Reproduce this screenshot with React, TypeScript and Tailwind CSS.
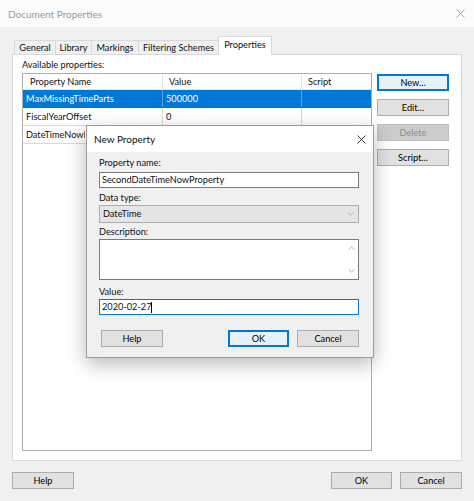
import React from 'react';

const XIcon = ({ className }: { className: string }) => (
  <svg viewBox="0 0 10 10" className={className} fill="none" stroke="currentColor" strokeWidth={1}>
    <path d="M0.5 0.5l9 9M9.5 0.5l-9 9" />
  </svg>
);

const Chevron = ({ up }: { up?: boolean }) => (
  <svg viewBox="0 0 8 5" className="w-[7px] h-[4px] text-[#a0a0a0]" fill="none" stroke="currentColor" strokeWidth={1}>
    <path d={up ? 'M0.5 4.5L4 1l3.5 3.5' : 'M0.5 0.5L4 4l3.5-3.5'} />
  </svg>
);

function Btn({ label, w, variant }: { label: string; w: string; variant?: 'default' | 'disabled' }) {
  let cls = 'bg-[#e1e1e1] border-[#adadad] text-black';
  if (variant === 'default') cls = 'bg-[#e5f1fb] border-[#0078d7] text-black shadow-[inset_0_0_0_1px_#0078d7]';
  if (variant === 'disabled') cls = 'bg-[#cccccc] border-[#bfbfbf] text-[#8c8c8c]';
  return (
    <div className={`${w} h-[17px] border flex items-center justify-center ${cls}`}>{label}</div>
  );
}

const tabs = [
  { name: 'General', w: 'w-[41px]' },
  { name: 'Library', w: 'w-[36px]' },
  { name: 'Markings', w: 'w-[47px]' },
  { name: 'Filtering Schemes', w: 'w-[80px]' },
];

// last row is half hidden behind the dialog, clip its name where the dialog starts
const rows = [
  { name: 'MaxMissingTimeParts', value: '500000', selected: true },
  { name: 'FiscalYearOffset', value: '0' },
  { name: 'DateTimeNowProperty', value: '', clip: true },
];

export default function App() {
  return (
    <div className="relative w-[474px] h-[501px] bg-[#f0f0f0] overflow-hidden text-[9.2px] leading-[12px] text-[#111] font-['Lato','Liberation_Sans',sans-serif]">
      {/* title bar */}
      <div className="h-[27px] bg-[#fbfbfb] flex items-center justify-between pl-[8px] pr-[9px]">
        <span className="text-[10px] text-[#9a9a9a]">Document Properties</span>
        <XIcon className="w-[9px] h-[9px] text-[#9a9a9a]" />
      </div>

      {/* tabs */}
      <div className="pt-[8px] flex items-end h-[27px] pl-[14px]">
        {tabs.map((t) => (
          <div key={t.name} className={`${t.w} h-[14px] border border-b-0 border-r-0 border-[#d9d9d9] flex items-center justify-center whitespace-nowrap`}>
            {t.name}
          </div>
        ))}
        <div className="w-[54px] h-[19px] -mb-px border border-b-0 border-[#d9d9d9] bg-white flex items-center justify-center relative z-10 pb-[3px]">
          Properties
        </div>
      </div>

      {/* panel */}
      <div className="mx-[12px] h-[407px] bg-white border border-[#d9d9d9] px-[9px] pt-[4px]">
        <div>Available properties:</div>
        <div className="flex mt-[2px]">
          <div className="w-[350px] h-[378px] border border-[#adadad] bg-white">
            <div className="flex h-[16px] border-b border-[#e5e5e5]">
              <div className="w-[140px] border-r border-[#e5e5e5] pl-[7px] flex items-center">Property Name</div>
              <div className="w-[139px] border-r border-[#e5e5e5] pl-[6px] flex items-center">Value</div>
              <div className="flex-1 pl-[6px] flex items-center">Script</div>
            </div>
            {rows.map((r) => (
              <div
                key={r.name}
                className={`flex h-[18px] border-b ${r.selected ? 'bg-[#0078d7] text-white border-[#0078d7]' : 'border-[#d9d9d9]'}`}
              >
                <div className={`w-[140px] border-r pl-[3px] flex items-center whitespace-nowrap overflow-hidden ${r.selected ? 'border-[#5aa0e0]' : 'border-[#d9d9d9]'}`}>
                  <span className={r.clip ? 'w-[59px] overflow-hidden' : ''}>{r.name}</span>
                </div>
                <div className={`w-[139px] border-r pl-[3px] flex items-center ${r.selected ? 'border-[#5aa0e0]' : 'border-[#d9d9d9]'}`}>{r.value}</div>
                <div className="flex-1" />
              </div>
            ))}
          </div>
          <div className="ml-[5px] flex flex-col gap-[8px] pt-[1px]">
            <Btn label="New..." w="w-[72px]" variant="default" />
            <Btn label="Edit..." w="w-[72px]" />
            <Btn label="Delete" w="w-[72px]" variant="disabled" />
            <Btn label="Script..." w="w-[72px]" />
          </div>
        </div>
      </div>

      {/* bottom buttons */}
      <div className="flex justify-between px-[12px] mt-[11px]">
        <Btn label="Help" w="w-[62px]" />
        <div className="flex gap-[8px]">
          <Btn label="OK" w="w-[61px]" />
          <Btn label="Cancel" w="w-[62px]" />
        </div>
      </div>

      {/* New Property dialog */}
      <div className="absolute left-[86px] top-[125px] w-[288px] h-[233px] bg-[#f0f0f0] border border-[#9c9c9c] shadow-[0_6px_18px_rgba(0,0,0,0.28)] z-20">
        <div className="h-[26px] bg-white flex items-center justify-between pl-[7px] pr-[7px]">
          <span className="text-[10px]">New Property</span>
          <XIcon className="w-[9px] h-[9px] text-[#222]" />
        </div>
        <div className="px-[12px] pt-[5px]">
          <div>Property name:</div>
          <div className="mt-[3px] h-[16px] w-[260px] bg-white border border-[#7a7a7a] pl-[2px] flex items-center">SecondDateTimeNowProperty</div>
          <div className="mt-[4px]">Data type:</div>
          <div className="mt-[1px] h-[18px] w-[260px] bg-[#e5e5e5] border border-[#acacac] pl-[3px] pr-[4px] flex items-center justify-between">
            <span>DateTime</span>
            <Chevron />
          </div>
          <div className="mt-[3px]">Description:</div>
          <div className="mt-[1px] h-[41px] w-[260px] bg-white border border-[#7a7a7a] flex justify-end">
            <div className="w-[13px] flex flex-col items-center justify-between py-[6px]">
              <Chevron up />
              <Chevron />
            </div>
          </div>
          <div className="mt-[6px]">Value:</div>
          <div className="mt-[1px] h-[16px] w-[260px] bg-white border border-[#0078d7] pl-[2px] flex items-center">
            <span>2020-02-27</span>
            <span className="w-px h-[11px] bg-black" />
          </div>
          <div className="mt-[15px] flex pl-[2px]">
            <Btn label="Help" w="w-[62px]" />
            <div className="ml-[65px]">
              <Btn label="OK" w="w-[61px]" variant="default" />
            </div>
            <div className="ml-[8px]">
              <Btn label="Cancel" w="w-[62px]" />
            </div>
          </div>
        </div>
      </div>
    </div>
  );
}
